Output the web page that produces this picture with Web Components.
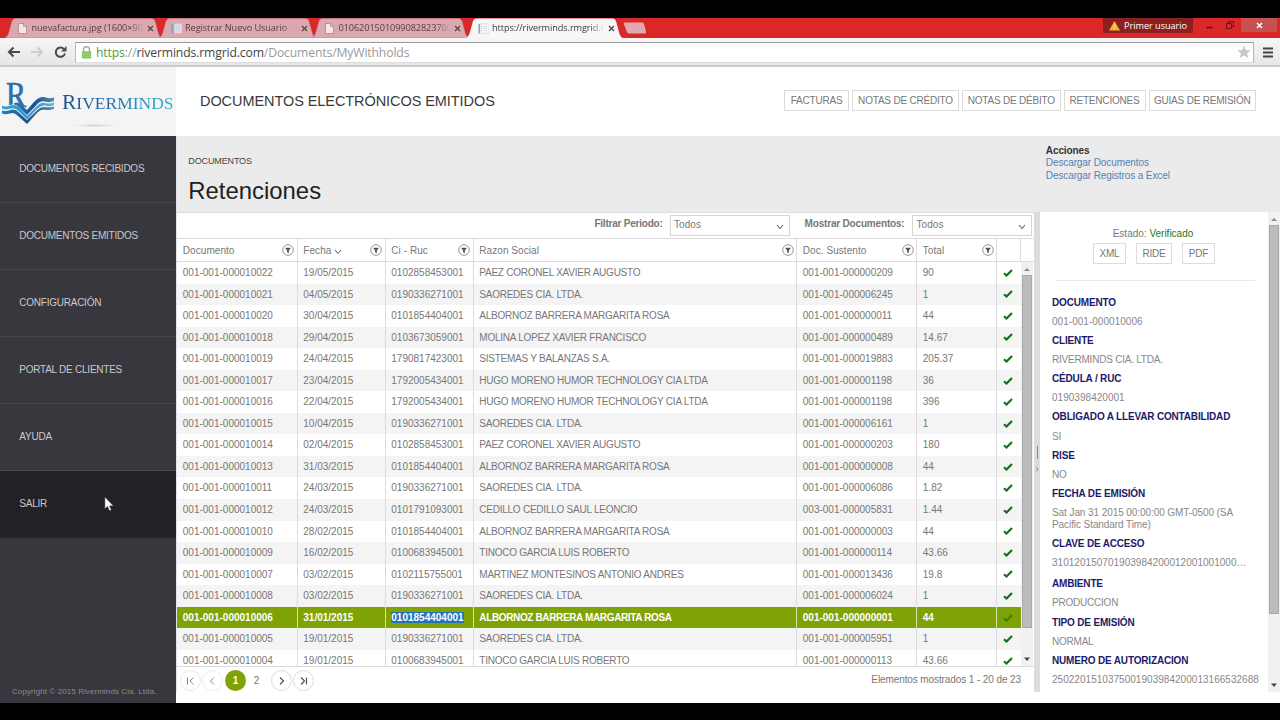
<!DOCTYPE html>
<html lang="es">
<head>
<meta charset="utf-8">
<title>Riverminds</title>
<style>
    html, body { margin: 0; padding: 0; background: #000; }
    body { width: 1280px; height: 720px; overflow: hidden; font-family: "Liberation Sans", Arial, sans-serif; }
</style>
</head>
<body>
<app-window></app-window>

<script>
(function () {
    // small helper: attaches an open shadow root with the given markup
    function render(el, html) {
        const tmpl = document.createElement('template');
        tmpl.innerHTML = html;
        const root = el.shadowRoot || el.attachShadow({mode: 'open'});
        root.appendChild(tmpl.content.cloneNode(true));
        return root;
    }

    class BrowserTab extends HTMLElement {
        connectedCallback() {
            const icon = this.getAttribute('icon') === 'page'
                ? '<path d="M1.5 .5h5l3 3v7h-8z" fill="#f6e6e8" stroke="#a8868c" stroke-width=".8"/><path d="M6.5 .5v3h3" fill="none" stroke="#a8868c" stroke-width=".8"/>'
                : '<path d="M.5 1h1.6v9.5H.5z" fill="#8aa0b4"/><path d="M3.5 .8h6l1.5 1.500v8H3.500z" fill="#fff" fill-opacity=".55" stroke="#b9cbd6" stroke-width=".6"/><path d="M5 3.500h4M5 5.500h4M5 7.500h4" stroke="#b7d3e4" stroke-width=".7"/>';
            render(this, `
                <style>
                    :host { display: block; position: relative; width: 157px; margin-right: -3.500px; height: 20px; box-sizing: border-box; }
                    .shape { position: absolute; inset: 0; width: 157px; height: 20px; }
                    .in { position: relative; display: flex; align-items: center; height: 20px; padding: 0 8px 0 12px; }
                    .icon { width: 11px; height: 11px; flex: none; }
                    .text { width: 112px; margin-left: 3.500px; overflow: hidden; white-space: nowrap; font: 9.200px/20px "Open Sans", sans-serif; letter-spacing: -.1px; color: #5b3b42;
                        -webkit-mask-image: linear-gradient(90deg, #000 88%, transparent); mask-image: linear-gradient(90deg, #000 88%, transparent); }
                    .x { width: 7px; height: 7px; margin-left: 4px; flex: none; }
                    :host([active]) { z-index: 2; }
                    :host([active]) .text { color: #3a3a3a; }
                </style>
                <svg class="shape" viewBox="0 0 157 20">
                    <path d="M0 20 C2 19 3 17 4 14 L7 3 Q8 .5 10 .5 H147 Q149 .5 150 3 L153.500 16 Q154.500 19 157 20Z"
                        fill="${this.hasAttribute('active') ? '#f8f6f6' : '#dba8af'}" stroke="${this.hasAttribute('active') ? 'none' : '#b87880'}" stroke-width=".6"/>
                </svg>
                <div class="in">
                    <svg class="icon" viewBox="0 0 11 11">${icon}</svg>
                    <div class="text"><slot></slot></div>
                    <svg class="x" viewBox="0 0 7 7"><path d="M1 1l5 5M6 1l-5 5" stroke="#5c4448" stroke-width="1.300"/></svg>
                </div>`);
        }
    }
    customElements.define('browser-tab', BrowserTab);

    class BrowserChrome extends HTMLElement {
        connectedCallback() {
            render(this, `
                <style>
                    :host { display: block; height: 49px; }
                    .strip { display: flex; height: 20px; background: #da2828; padding-left: 5px; position: relative; }
                    .new { width: 24px; height: 12px; margin: 4px 0 0 4px; }
                    .controls { display: flex; margin-left: auto; height: 15px; margin-right: 3px; }
                    .user { display: flex; align-items: center; width: 90px; background: #8c1f1f; color: #fff; font: 9.200px/14px "Open Sans", sans-serif; letter-spacing: -.05px; box-sizing: border-box; padding-left: 6px; white-space: nowrap; }
                    .user svg { width: 11px; height: 10px; margin-right: 4px; }
                    .controls > svg { height: 14px; }
                    .close { background: #c75050; width: 36px; }
                    .bar { display: flex; align-items: center; height: 29px; box-sizing: border-box; border-bottom: 2px solid #cbcbcb; background: linear-gradient(#f7f6f6, #e6e6e6); }
                    .nav { width: 75px; height: 26px; flex: none; }
                    .url { display: flex; align-items: center; flex: 1; height: 21px; margin-top: 1px; box-sizing: border-box; background: #fff; border: 1px solid #b9b9b9; border-top-color: #999; border-bottom-color: #ddd; color: #999;
                        font: 12.200px/19px "Open Sans", sans-serif; letter-spacing: -.14px; padding-left: 5px; white-space: nowrap; }
                    .url svg { width: 11px; height: 13px; margin-right: 4px; }
                    .url .star { width: 14px; height: 14px; margin: 0 2px 0 auto; }
                    b { font-weight: 400; color: #444; } i { font-style: normal; color: #4f9e45; }
                    .menu { width: 26px; height: 20px; }
                </style>
                <div class="strip">
                    <browser-tab icon="page">nuevafactura.jpg (1600×900)</browser-tab>
                    <browser-tab icon="doc">Registrar Nuevo Usuario</browser-tab>
                    <browser-tab icon="page">01062015010990828237001</browser-tab>
                    <browser-tab icon="doc" active>https://riverminds.rmgrid.com</browser-tab>
                    <svg class="new" viewBox="0 0 24 12"><path d="M2 .5H19Q20.500 .5 21 2L23 9.500Q23.400 11.500 22 11.500H6Q4.500 11.500 4 10L.8 2Q.4 .5 2 .5Z" fill="#dfa9af"/></svg>
                    <div class="controls">
                        <div class="user">
                            <svg viewBox="0 0 11 10"><path d="M5.500 0L11 9.500H0z" fill="#f7b22a"/><path d="M5.500 3v3.500M5.500 7.500v1" stroke="#fbe0a0"/></svg>
                            <span>Primer usuario</span>
                        </div>
                        <svg width="48" viewBox="0 0 48 14"><path d="M13.500 9.500h6" stroke="#4d1010" stroke-width="1.500"/><path d="M33.500 5.500h5v5h-5zM35.500 5V3.500h5v5H39" fill="none" stroke="#6b1212"/></svg>
                        <svg class="close" viewBox="0 0 36 14"><path d="M16 5l5 5M21 5l-5 5" stroke="#fff" stroke-width="1.500"/></svg>
                    </div>
                </div>
                <div class="bar">
                    <svg class="nav" viewBox="0 0 75 26">
                        <path d="M20 13H9.500M13.500 8.500L9 13l4.500 4.500" fill="none" stroke="#4a4a4a" stroke-width="2.100"/>
                        <path d="M31 13h10.500M37.500 8.500L42 13l-4.500 4.500" fill="none" stroke="#cdcdcd" stroke-width="2.100"/>
                        <path d="M64 10A4.700 4.700 0 1 0 65 14.500" fill="none" stroke="#4a4a4a" stroke-width="2"/><path d="M66.500 7v5.500H61z" fill="#4a4a4a"/>
                    </svg>
                    <div class="url">
                        <svg viewBox="0 0 11 13"><path d="M2.500 6V3.800a3 3 0 0 1 6 0V6" fill="none" stroke="#a3a9a3" stroke-width="1.400"/><rect x=".8" y="5.300" width="9.400" height="7.200" rx=".8" fill="#86c65a"/><path d="M1 8h9M1 10.200h9" stroke="#a9dc83" stroke-width=".7"/></svg>
                        <span><i>https</i>://<b>riverminds.rmgrid.com</b>/Documents/MyWithholds</span>
                        <svg class="star" viewBox="0 0 14 14"><path d="M7 .5l1.900 4.400 4.800.4-3.600 3.100 1.100 4.700L7 10.600l-4.200 2.500 1.100-4.700L.3 5.300l4.800-.4z" fill="#c9c9c9"/></svg>
                    </div>
                    <svg class="menu" viewBox="0 0 26 20"><path d="M9 6.500h10M9 10.500h10M9 14.500h10" stroke="#444" stroke-width="2"/></svg>
                </div>`);
        }
    }
    customElements.define('browser-chrome', BrowserChrome);

    class RiverLogo extends HTMLElement {
        connectedCallback() {
            render(this, `
                <style>
                    :host { display: flex; width: 176px; height: 69px; background: #f4f4f4; position: relative; }
                    svg { width: 60px; height: 69px; flex: none; }
                    .name { font: 17.500px/69px "Liberation Serif", serif; margin: 1px 0 0 2px; text-transform: uppercase;
                        background: linear-gradient(90deg, #1c4f8d, #1f6ba8 40%, #34b5cc); -webkit-background-clip: text; background-clip: text; color: transparent; }
                    .name::first-letter { font-size: 21.500px; }
                    .shadow { position: absolute; left: 72px; top: 57px; width: 46px; height: 3px; border-radius: 50%; background: radial-gradient(closest-side, #cfcfcf, #f4f4f4); }
                </style>
                <svg viewBox="0 67 60 69">
                    <defs>
                        <linearGradient id="a"><stop offset="0" stop-color="#2f7dba"/><stop offset=".5" stop-color="#1e4f8e"/><stop offset="1" stop-color="#4d8cb2"/></linearGradient>
                        <linearGradient id="b"><stop offset="0" stop-color="#3ba3ce"/><stop offset=".5" stop-color="#2e94ca"/><stop offset="1" stop-color="#57bccb"/></linearGradient>
                    </defs>
                    <text x="6" y="107" font-family="Liberation Serif" font-size="35" textLength="20" lengthAdjust="spacingAndGlyphs" fill="#2c6fac" stroke="#2c6fac" stroke-width=".7">R</text>
                    <path d="M2 106 L13 104.500 L27 112 L36 104 Q44 97 54 102 V118 L27 126 L2 117Z" fill="#f4f4f4"/>
                    <path d="M14 103 Q18 101.500 21 105 L27 110 L34 102 Q40 95.500 46 97.500 Q50 99 54 97.200 V101 Q49 103 45 101.500 Q40 100.500 36 105.500 L27 115 L18 106.500 Q16 104.500 14 104.500Z" fill="url(#a)"/>
                    <path d="M2 105.800 Q6 107.500 10 105.500 Q16 103.500 20 108.500 L27 116 L36 107 Q41 101.500 46 103.200 Q50 104.300 54 102.500 V105 Q49 107.300 45 105.600 Q41 104.800 37 109 L27 119.200 L19 111.500 Q14 106.800 10 108.700 Q5 110.300 2 108.600Z" fill="url(#b)"/>
                    <path d="M2 110.200 Q6 112 10 110 Q15 108.500 19 112.700 L27 120 L37 110.500 Q41 106.300 46 107.200 Q50 107.700 54 106.500 V108.700 Q49 110.700 45 109.700 Q41 109 37 113 L27 124 L18 116 Q14 111.800 10 113.600 Q5 115 2 113.500Z" fill="url(#a)"/>
                </svg>
                <div class="name">Riverminds</div>
                <div class="shadow"></div>`);
        }
    }
    customElements.define('river-logo', RiverLogo);

    class SideMenu extends HTMLElement {
        connectedCallback() {
            const items = ['Documentos recibidos', 'Documentos emitidos', 'Configuración', 'Portal de clientes', 'Ayuda', 'Salir'];
            render(this, `
                <style>
                    :host { display: flex; flex-direction: column; width: 176px; background: #38373d; position: relative; }
                    a { display: block; height: 66px; border-bottom: 1px solid #47464c; padding-left: 19.300px; font-size: 10px; line-height: 66px; letter-spacing: -.24px; color: #c9c9cc; }
                    a.hover { background: #222126; border-color: #2b2a2f; }
                    small { margin: auto 0 6px 12px; font-size: 8px; line-height: 10px; letter-spacing: .09px; color: #8c8b90; white-space: nowrap; }
                    svg { position: absolute; left: 104px; top: 360px; width: 11px; height: 17px; }
                </style>
                ${items.map(t => `<a${t === 'Salir' ? ' class="hover"' : ''}>${t.toUpperCase()}</a>`).join('')}
                <small>Copyright © 2015 Riverminds Cia. Ltda.</small>
                <svg viewBox="0 0 11 17"><path d="M.8 .8V13l2.700-2.400 2 4.400 2-.9-1.900-4.200h3.900z" fill="#fff" stroke="#222" stroke-width=".6"/></svg>`);
        }
    }
    customElements.define('side-menu', SideMenu);

    class OutlineButton extends HTMLElement {
        connectedCallback() {
            render(this, `
                <style>
                    :host { display: block; box-sizing: border-box; height: 21px; border: 1px solid #dcdcdc; background: #fff; text-align: center; font-size: 10px; line-height: 19px; letter-spacing: -.2px; color: #777; white-space: nowrap; }
                </style><slot></slot>`);
        }
    }
    customElements.define('outline-button', OutlineButton);

    class PageHeader extends HTMLElement {
        connectedCallback() {
            render(this, `
                <style>
                    :host { display: flex; align-items: center; height: 69px; background: #fff; }
                    h2 { margin: -2px 0 0 24px; font-weight: 400; font-size: 14.500px; letter-spacing: -.07px; color: #3a3a3a; flex: 1; }
                    nav { display: flex; gap: 3px; margin-right: 24px; margin-top: -2px; }
                </style>
                <h2>DOCUMENTOS ELECTRÓNICOS EMITIDOS</h2>
                <nav>
                    <outline-button style="width:65px">FACTURAS</outline-button>
                    <outline-button style="width:107px">NOTAS DE CRÉDITO</outline-button>
                    <outline-button style="width:98.500px">NOTAS DE DÉBITO</outline-button>
                    <outline-button style="width:82px">RETENCIONES</outline-button>
                    <outline-button style="width:107.500px">GUIAS DE REMISIÓN</outline-button>
                </nav>`);
        }
    }
    customElements.define('page-header', PageHeader);

    class PageTitle extends HTMLElement {
        connectedCallback() {
            render(this, `
                <style>
                    :host { display: flex; height: 76px; background: #ebebeb; box-sizing: border-box; border-left: 1px solid #e2e2ee; }
                    .left { width: 857.500px; box-sizing: content-box; padding: 19px 0 0 11.300px; }
                    .crumb { font-size: 9px; line-height: 12px; letter-spacing: -.13px; color: #444; }
                    h1 { margin: 10px 0 0; font-weight: 400; font-size: 23.900px; line-height: 28px; color: #222; }
                    .actions { padding-top: 8.500px; font-size: 10px; line-height: 12.800px; letter-spacing: -.1px; color: #5183b5; white-space: nowrap; }
                    b { display: block; color: #333; } a { display: block; }
                </style>
                <div class="left"><div class="crumb">DOCUMENTOS</div><h1>Retenciones</h1></div>
                <div class="actions"><b>Acciones</b><a>Descargar Documentos</a><a>Descargar Registros a Excel</a></div>`);
        }
    }
    customElements.define('page-title', PageTitle);

    class SelectBox extends HTMLElement {
        connectedCallback() {
            render(this, `
                <style>
                    :host { display: flex; align-items: center; justify-content: space-between; box-sizing: border-box; width: 120px; height: 21px; border: 1px solid #d6d6d6; background: #fff; padding: 0 5px 2px 3.500px; color: #777; font-weight: 400; letter-spacing: .05px; }
                    svg { width: 8px; height: 6px; margin-top: 5px; }
                </style><slot></slot>
                <svg viewBox="0 0 8 6"><path d="M1 1l3 3.500L7 1" fill="none" stroke="#666" stroke-width="1.100"/></svg>`);
        }
    }
    customElements.define('select-box', SelectBox);

    // vertical scrollbar, "thumb" is the thumb height
    class ScrollBar extends HTMLElement {
        connectedCallback() {
            render(this, `
                <style>
                    :host { display: flex; flex-direction: column; align-items: center; width: 12px; background: #f1f1f1; }
                    .thumb { width: 10px; box-sizing: border-box; background: #bcbcbc; border: 1px solid #a8a8a8; height: ${this.getAttribute('thumb')}px; }
                    svg { width: 10px; height: 13px; flex: none; }
                    svg:last-child { margin-top: auto; }
                </style>
                <svg viewBox="0 0 10 13"><path d="M2 9h6L5 6z" fill="#8a8a8a"/></svg>
                <div class="thumb"></div>
                <svg viewBox="0 0 10 13"><path d="M2 4.500h6L5 8z" fill="#444"/></svg>`);
        }
    }
    customElements.define('scroll-bar', ScrollBar);

    const rows = [
        ['001-001-000010022', '19/05/2015', '0102858453001', 'PAEZ CORONEL XAVIER AUGUSTO', '001-001-000000209', '90'],
        ['001-001-000010021', '04/05/2015', '0190336271001', 'SAOREDES CIA. LTDA.', '001-001-000006245', '1'],
        ['001-001-000010020', '30/04/2015', '0101854404001', 'ALBORNOZ BARRERA MARGARITA ROSA', '001-001-000000011', '44'],
        ['001-001-000010018', '29/04/2015', '0103673059001', 'MOLINA LOPEZ XAVIER FRANCISCO', '001-001-000000489', '14.67'],
        ['001-001-000010019', '24/04/2015', '1790817423001', 'SISTEMAS Y BALANZAS S.A.', '001-001-000019883', '205.37'],
        ['001-001-000010017', '23/04/2015', '1792005434001', 'HUGO MORENO HUMOR TECHNOLOGY CIA LTDA', '001-001-000001198', '36'],
        ['001-001-000010016', '22/04/2015', '1792005434001', 'HUGO MORENO HUMOR TECHNOLOGY CIA LTDA', '001-001-000001198', '396'],
        ['001-001-000010015', '10/04/2015', '0190336271001', 'SAOREDES CIA. LTDA.', '001-001-000006161', '1'],
        ['001-001-000010014', '02/04/2015', '0102858453001', 'PAEZ CORONEL XAVIER AUGUSTO', '001-001-000000203', '180'],
        ['001-001-000010013', '31/03/2015', '0101854404001', 'ALBORNOZ BARRERA MARGARITA ROSA', '001-001-000000008', '44'],
        ['001-001-000010011', '24/03/2015', '0190336271001', 'SAOREDES CIA. LTDA.', '001-001-000006086', '1.82'],
        ['001-001-000010012', '24/03/2015', '0101791093001', 'CEDILLO CEDILLO SAUL LEONCIO', '003-001-000005831', '1.44'],
        ['001-001-000010010', '28/02/2015', '0101854404001', 'ALBORNOZ BARRERA MARGARITA ROSA', '001-001-000000003', '44'],
        ['001-001-000010009', '16/02/2015', '0100683945001', 'TINOCO GARCIA LUIS ROBERTO', '001-001-000000114', '43.66'],
        ['001-001-000010007', '03/02/2015', '0102115755001', 'MARTINEZ MONTESINOS ANTONIO ANDRES', '001-001-000013436', '19.8'],
        ['001-001-000010008', '03/02/2015', '0190336271001', 'SAOREDES CIA. LTDA.', '001-001-000006024', '1'],
        ['001-001-000010006', '31/01/2015', '0101854404001', 'ALBORNOZ BARRERA MARGARITA ROSA', '001-001-000000001', '44'],
        ['001-001-000010005', '19/01/2015', '0190336271001', 'SAOREDES CIA. LTDA.', '001-001-000005951', '1'],
        ['001-001-000010004', '19/01/2015', '0100683945001', 'TINOCO GARCIA LUIS ROBERTO', '001-001-000000113', '43.66']
    ];
    const selected = 16;

    class DocumentGrid extends HTMLElement {
        connectedCallback() {
            const filter = '<svg class="filter" viewBox="0 0 12 12"><circle cx="6" cy="6" r="5.300" fill="#fff" stroke="#777" stroke-width=".8"/><path d="M3 3.800h6L6.900 6.500v2.700l-1.800-1V6.500z" fill="#555"/></svg>';
            const heads = ['Documento', 'Fecha', 'Ci - Ruc', 'Razon Social', 'Doc. Sustento', 'Total'];
            const check = '<svg class="check" viewBox="0 0 10 8"><path d="M1 4.200l2.500 2.300L9 1" fill="none" stroke="currentColor" stroke-width="2.200"/></svg>';
            render(this, `
                <style>
                    :host { display: flex; flex-direction: column; width: 857px; background: #fff; font-size: 10px; color: #777; letter-spacing: 0; box-sizing: border-box; border-left: 1px solid #e2e2ee; border-top: 1px solid #dcdcdc; }
                    .filters { display: flex; justify-content: flex-end; height: 26px; padding: 2px 2px 0 0; box-sizing: border-box; border-bottom: 1px solid #dcdcdc; font-weight: 700; letter-spacing: -.22px; }
                    .filters label { line-height: 17px; margin-right: 7px; }
                    .filters label + select-box + label { margin-left: 15px; letter-spacing: -.18px; margin-right: 7.500px; }
                    .row { display: grid; grid-template-columns: 120.500px 88px 88px 323.500px 120px 80px 23.500px; height: 21.560px; line-height: 21.560px; white-space: nowrap; }
                    .row > span { border-right: 1px solid #dcdcdc; padding-left: 5.800px; box-sizing: border-box; overflow: hidden; }
                    .row > span:nth-child(4) { letter-spacing: -.24px; }
                    .row > span:nth-child(7) { padding: 0 2.500px 0 0; display: flex; align-items: center; justify-content: center; color: #14721d; }
                    .row:nth-child(even) { background: #f4f4f4; }
                    .row.on { background: #7fa206; color: #fff; font-weight: 700; }
                    .row.on > span { border-color: #d5e2a8; }
                    .row.on > span:nth-child(4) { letter-spacing: -.36px; }
                    .row.on > span:nth-child(7) { color: #2f8a06; }
                    .row:not(.head) > span:last-child { border: 0; }
                    mark { background: #2273b9; color: #fff; }
                    .head { height: 23px; line-height: 23px; border-bottom: 1px solid #dcdcdc; box-sizing: border-box; }
                    .head > span { display: flex; align-items: center; }
                    .head > span:nth-child(n) { letter-spacing: .06px; }
                    .filter { width: 12px; height: 12px; margin: 0 2.500px 0 auto; }
                    .sort { width: 8px; height: 6px; margin: 3px 0 0 3px; }
                    .check { width: 10px; height: 8px; }
                    .body { display: flex; height: 404px; overflow: hidden; border-bottom: 1px solid #dcdcdc; }
                    .rows { width: 843.500px; flex: none; overflow: hidden; }
                    .body scroll-bar { margin-left: .5px; }
                    .pager { display: flex; align-items: center; height: 26px; padding: 0 13px 0 2px; letter-spacing: -.1px; }
                    .pager svg { width: 23px; height: 23px; margin-right: -.8px; }
                    .pager b, .pager i { width: 21px; height: 21px; line-height: 21px; text-align: center; font-style: normal; }
                    .pager b { border-radius: 50%; background: #7fa206; color: #fff; margin: 0 0 0 1.500px; }
                    .pager i { margin-right: 3px; }
                    .pager span { margin: -2px 0 0 auto; }
                </style>
                <div class="filters">
                    <label>Filtrar Periodo:</label><select-box>Todos</select-box>
                    <label>Mostrar Documentos:</label><select-box>Todos</select-box>
                </div>
                <div class="row head">
                    ${heads.map(h => `<span>${h}${h === 'Fecha' ? '<svg class="sort" viewBox="0 0 8 6"><path d="M1 1l3 3.500L7 1" fill="none" stroke="#555"/></svg>' : ''}${filter}</span>`).join('')}<span></span>
                </div>
                <div class="body">
                    <div class="rows">
                        ${rows.map((r, n) => `<div class="row${n === selected ? ' on' : ''}">${r.map((c, i) => `<span>${n === selected && i === 2 ? `<mark>${c}</mark>` : c}</span>`).join('')}<span>${check}</span></div>`).join('')}
                    </div>
                    <scroll-bar thumb="353"></scroll-bar>
                </div>
                <div class="pager">
                    <svg viewBox="0 0 23 23"><circle cx="11.500" cy="11.500" r="10" fill="none" stroke="#e8e8e8"/><path d="M8.500 8.500v7M14.500 8.500L11 12l3.500 3.500" fill="none" stroke="#888"/></svg>
                    <svg viewBox="0 0 23 23"><circle cx="11.500" cy="11.500" r="10" fill="none" stroke="#ececec"/><path d="M13 8.500L9.500 12l3.500 3.500" fill="none" stroke="#888"/></svg>
                    <b>1</b><i>2</i>
                    <svg viewBox="0 0 23 23"><circle cx="11.500" cy="11.500" r="10" fill="none" stroke="#dcdcdc"/><path d="M10 8.500l3.500 3.500-3.500 3.500" fill="none" stroke="#555" stroke-width="1.200"/></svg>
                    <svg viewBox="0 0 23 23"><circle cx="11.500" cy="11.500" r="10" fill="none" stroke="#dcdcdc"/><path d="M9 8.500l3.500 3.500L9 15.500M14.500 8.500v7" fill="none" stroke="#555" stroke-width="1.200"/></svg>
                    <span>Elementos mostrados 1 - 20 de 23</span>
                </div>`);
        }
    }
    customElements.define('document-grid', DocumentGrid);

    class DetailField extends HTMLElement {
        connectedCallback() {
            render(this, `
                <style>
                    :host { display: block; font-size: 10px; color: #888; }
                    b { display: block; height: 19.200px; line-height: 19.200px; color: #1d1a6b; letter-spacing: -.17px; white-space: nowrap; }
                    div { line-height: 11.200px; padding: 4px 0 3.950px; letter-spacing: var(--ls, -.22px); }
                </style>
                <b>${this.getAttribute('label')}</b><div><slot></slot></div>`);
        }
    }
    customElements.define('detail-field', DetailField);

    class DetailPanel extends HTMLElement {
        connectedCallback() {
            render(this, `
                <style>
                    :host { display: flex; flex: 1; height: 480px; background: #fff; overflow: hidden; font-size: 10px; }
                    .split { display: flex; flex-direction: column; justify-content: center; align-items: center; width: 6px; background: #dcdcdc; flex: none; }
                    .split svg { width: 6px; height: 30px; margin-top: 16px; }
                    .main { width: 228px; box-sizing: border-box; padding: 15px 14px 0 12px; flex: none; }
                    .state { text-align: center; width: 202px; line-height: 14px; letter-spacing: 0; color: #777; }
                    .state span { color: #177a17; }
                    .buttons { display: flex; gap: 10px; margin: 2px 0 16px 41px; }
                    hr { border: 0; border-top: 1px solid #e8e8e8; margin: 0 -1px 11.500px 4px; }
                    .num { --ls: .03px; white-space: nowrap; }
                </style>
                <div class="split"><svg viewBox="0 0 6 30"><path d="M3.500 1v13M2 22l2.200 2.200L2 26.500" fill="none" stroke="#8a8a8a"/></svg></div>
                <div class="main">
                    <div class="state">Estado: <span>Verificado</span></div>
                    <div class="buttons">
                        <outline-button style="width:33px">XML</outline-button>
                        <outline-button style="width:36px">RIDE</outline-button>
                        <outline-button style="width:33px">PDF</outline-button>
                    </div>
                    <hr>
                    <detail-field label="DOCUMENTO" class="num">001-001-000010006</detail-field>
                    <detail-field label="CLIENTE">RIVERMINDS CIA. LTDA.</detail-field>
                    <detail-field label="CÉDULA / RUC" class="num">0190398420001</detail-field>
                    <detail-field label="OBLIGADO A LLEVAR CONTABILIDAD">SI</detail-field>
                    <detail-field label="RISE">NO</detail-field>
                    <detail-field label="FECHA DE EMISIÓN" style="--ls:-.08px;margin-right:14px">Sat Jan 31 2015 00:00:00 GMT-0500 (SA Pacific Standard Time)</detail-field>
                    <detail-field label="CLAVE DE ACCESO" class="num" style="margin-bottom:2.200px">310120150701903984200012001001000…</detail-field>
                    <detail-field label="AMBIENTE">PRODUCCION</detail-field>
                    <detail-field label="TIPO DE EMISIÓN">NORMAL</detail-field>
                    <detail-field label="NUMERO DE AUTORIZACION" class="num">2502201510375001903984200013166532688</detail-field>
                </div>
                <scroll-bar thumb="389"></scroll-bar>`);
        }
    }
    customElements.define('detail-panel', DetailPanel);

    class AppWindow extends HTMLElement {
        connectedCallback() {
            render(this, `
                <style>
                    :host { display: block; padding-top: 18px; }
                    .page { display: grid; grid-template: 69px 567px / 176px 1104px; background: #fff; }
                    .work { display: flex; }
                </style>
                <browser-chrome></browser-chrome>
                <div class="page">
                    <river-logo></river-logo>
                    <page-header></page-header>
                    <side-menu></side-menu>
                    <main>
                        <page-title></page-title>
                        <div class="work">
                            <document-grid style="width:858px"></document-grid>
                            <detail-panel></detail-panel>
                        </div>
                    </main>
                </div>`);
        }
    }
    customElements.define('app-window', AppWindow);
})();
</script>
</body>
</html>
